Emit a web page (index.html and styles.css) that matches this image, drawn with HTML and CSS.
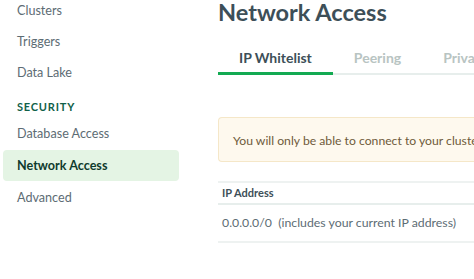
FILE: index.html
```html
<!DOCTYPE html>
<html>
<head>
<meta charset="utf-8">
<link rel="stylesheet" href="styles.css">
</head>
<body>
<div class="page">
  <nav class="sidebar">
    <ul class="nav-group first">
      <li class="nav-item">Clusters</li>
      <li class="nav-item">Triggers</li>
      <li class="nav-item">Data Lake</li>
    </ul>
    <div class="nav-header">SECURITY</div>
    <ul class="nav-group">
      <li class="nav-item">Database Access</li>
      <li class="nav-item active">Network Access</li>
      <li class="nav-item">Advanced</li>
    </ul>
  </nav>
  <main class="main">
    <h1 class="title">Network Access</h1>
    <div class="tabs">
      <div class="tab active">IP Whitelist</div>
      <div class="tab">Peering</div>
      <div class="tab">Private Endpoint</div>
    </div>
    <div class="banner">You will only be able to connect to your cluster from a trusted IP address.</div>
    <div class="table">
      <div class="th">IP Address</div>
      <div class="td">0.0.0.0/0&nbsp;&nbsp;(includes your current IP address)</div>
    </div>
  </main>
</div>
</body>
</html>
```

FILE: styles.css
```css
html, body {
  margin: 0;
  padding: 0;
  background: #ffffff;
  overflow: hidden;
}
body {
  font-family: "Lato", "Liberation Sans", Arial, sans-serif;
  width: 474px;
  height: 279px;
}
.page {
  display: flex;
  align-items: flex-start;
}
.sidebar {
  width: 218px;
  flex: none;
  padding-left: 3px;
  box-sizing: border-box;
}
.nav-group {
  list-style: none;
  margin: 0;
  padding: 0;
  display: flex;
  flex-direction: column;
  gap: 1px;
  width: 176px;
}
.nav-group.first {
  margin-top: -5px;
  gap: 0;
}
.nav-item {
  height: 31px;
  line-height: 31px;
  padding-left: 14px;
  font-size: 12.6px;
  color: #5d6c74;
  border-radius: 4px;
}
.nav-item.active {
  background: #e4f4e4;
  color: #0f3b2d;
  font-weight: 700;
}
.nav-header {
  margin: 12px 0 4px 14px;
  height: 14px;
  line-height: 14px;
  font-size: 11px;
  font-weight: 700;
  letter-spacing: 0.8px;
  color: #116149;
}
.main {
  flex: 1;
  min-width: 0;
  overflow: hidden;
}
.title {
  margin: 0;
  margin-top: -2px;
  font-size: 23.5px;
  line-height: 28px;
  font-weight: 700;
  color: #3d4f58;
  white-space: nowrap;
}
.tabs {
  display: flex;
  margin-top: 18px;
  border-bottom: 2px solid #e7eeec;
  white-space: nowrap;
}
.tab {
  flex: none;
  padding: 0 21px;
  height: 28px;
  line-height: 28px;
  font-size: 14px;
  font-weight: 700;
  color: #b8c4c2;
  margin-bottom: -2px;
  border-bottom: 3px solid transparent;
}
.tab.active {
  color: #3d4f58;
  border-bottom-color: #13aa52;
}
.banner {
  margin-top: 42px;
  height: 45px;
  line-height: 45px;
  box-sizing: border-box;
  padding-left: 14px;
  background: #fef9ee;
  border: 1px solid #f5e7c8;
  border-right: none;
  border-radius: 4px 0 0 4px;
  font-size: 12.2px;
  color: #6f5b3b;
  white-space: nowrap;
  overflow: hidden;
}
.table {
  margin-top: 19px;
  border-top: 2px solid #eef2f1;
}
.th {
  height: 20px;
  line-height: 20px;
  padding-left: 4px;
  font-size: 11px;
  font-weight: 700;
  color: #3d4f58;
  border-bottom: 2px solid #e7eeec;
}
.td {
  height: 36px;
  line-height: 36px;
  padding-left: 4px;
  font-size: 12.3px;
  color: #5d6c74;
  border-bottom: 2px solid #eef2f1;
  white-space: nowrap;
}
```
